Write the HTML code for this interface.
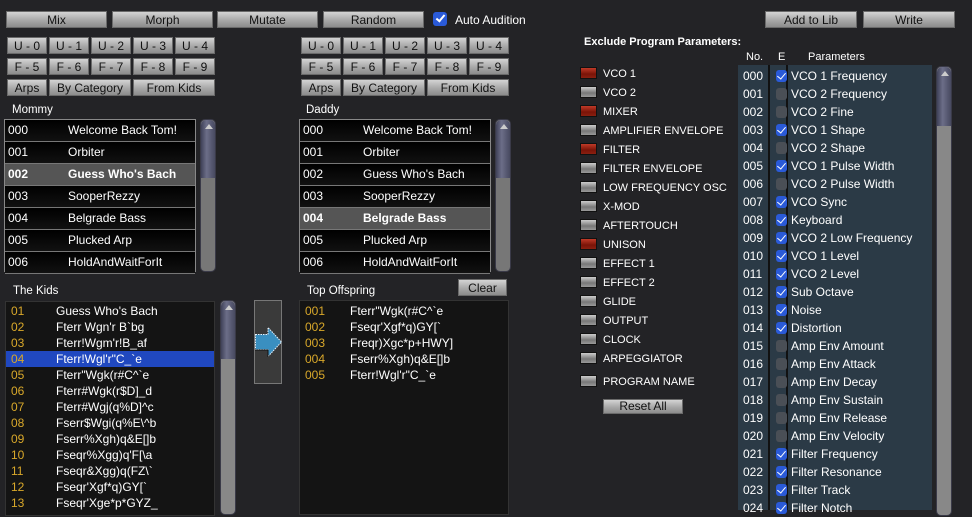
<!DOCTYPE html>
<html><head><meta charset="utf-8"><style>
*{box-sizing:border-box;margin:0;padding:0}
body{width:972px;height:510px;background:#232326;position:relative;overflow:hidden;font-family:"Liberation Sans",Arial,sans-serif;color:#fff;font-size:12px}
.a{position:absolute}
.b{position:absolute;height:17px;background:linear-gradient(#d4d4d4,#a8a8a8 55%,#8c8c8c);border:1px solid #6a6a6a;color:#111;text-align:center;line-height:16px;font-size:12px}
.lbl{position:absolute;font-size:11.5px;color:#fff}
.list{position:absolute;background:#000;border:1px solid #888}
.list .r{height:22px;border-bottom:1px solid #777;background:linear-gradient(#000,#111);position:relative;font-size:12px;line-height:21px}
.list .r span{position:absolute}
.list .r.s{background:#555;font-weight:bold}
.sb{position:absolute;width:16px;border-radius:5px;background:#888;overflow:hidden;border:1px solid #3a3a48}
.sb .t{position:absolute;left:0;right:0;top:0;background:linear-gradient(90deg,#3f4158,#6c6e88 40%,#474960);border-radius:5px 5px 0 0}
.sb .t:before{content:"";position:absolute;left:4px;top:4px;border-left:4px solid transparent;border-right:4px solid transparent;border-bottom:5px solid #ccc}
.kl{position:absolute;background:#141414;border:1px solid #333}
.kl .r{height:16px;line-height:16px;font-size:12px;position:relative}
.kl .r span{position:absolute}
.kl .r .n{color:#d9a82a}
.led{position:absolute;left:580px;width:17px;height:12px;border:1px solid #111;background:linear-gradient(#ccc,#777 60%,#999)}
.led.on{background:linear-gradient(#c03a28,#7a1408 60%,#8a2010)}
.pl{position:absolute;left:603px;font-size:11px}
.tb{position:absolute;left:738px;top:65px;width:194px;height:445px;background:#2b3a46}
.tr{position:absolute;left:738px;height:18px;line-height:18px;font-size:12px;width:194px}
.tr .n{position:absolute;left:5px}
.tr .c{position:absolute;left:38px;top:3px;width:11px;height:12px;border-radius:3px;background:#4a4f56}
.tr .c.k{background:#2a5ad8}
.tr .c.k:after{content:"";position:absolute;left:3px;top:1px;width:4px;height:7px;border:solid #fff;border-width:0 1.5px 1.5px 0;transform:rotate(40deg)}
.tr .p{position:absolute;left:53px}
</style></head><body>
<div class="b" style="left:6px;top:11px;width:101px">Mix</div>
<div class="b" style="left:112px;top:11px;width:101px">Morph</div>
<div class="b" style="left:217px;top:11px;width:101px">Mutate</div>
<div class="b" style="left:323px;top:11px;width:101px">Random</div>
<div class="a" style="left:433px;top:12px;width:14px;height:14px;border-radius:3px;background:#2a5ad8"></div>
<div class="a" style="left:438px;top:13px;width:5px;height:9px;border:solid #fff;border-width:0 2px 2px 0;transform:rotate(40deg)"></div>
<div class="lbl" style="left:455px;top:13px;font-size:12px">Auto Audition</div>
<div class="b" style="left:765px;top:11px;width:92px">Add to Lib</div>
<div class="b" style="left:863px;top:11px;width:92px">Write</div>

<div class="b" style="left:7px;top:37px;width:40px">U - 0</div><div class="b" style="left:49px;top:37px;width:40px">U - 1</div><div class="b" style="left:91px;top:37px;width:40px">U - 2</div><div class="b" style="left:133px;top:37px;width:40px">U - 3</div><div class="b" style="left:175px;top:37px;width:40px">U - 4</div>
<div class="b" style="left:7px;top:58px;width:40px">F - 5</div><div class="b" style="left:49px;top:58px;width:40px">F - 6</div><div class="b" style="left:91px;top:58px;width:40px">F - 7</div><div class="b" style="left:133px;top:58px;width:40px">F - 8</div><div class="b" style="left:175px;top:58px;width:40px">F - 9</div>
<div class="b" style="left:7px;top:79px;width:40px">Arps</div><div class="b" style="left:49px;top:79px;width:82px">By Category</div><div class="b" style="left:133px;top:79px;width:82px">From Kids</div>

<div class="b" style="left:301px;top:37px;width:40px">U - 0</div><div class="b" style="left:343px;top:37px;width:40px">U - 1</div><div class="b" style="left:385px;top:37px;width:40px">U - 2</div><div class="b" style="left:427px;top:37px;width:40px">U - 3</div><div class="b" style="left:469px;top:37px;width:40px">U - 4</div>
<div class="b" style="left:301px;top:58px;width:40px">F - 5</div><div class="b" style="left:343px;top:58px;width:40px">F - 6</div><div class="b" style="left:385px;top:58px;width:40px">F - 7</div><div class="b" style="left:427px;top:58px;width:40px">F - 8</div><div class="b" style="left:469px;top:58px;width:40px">F - 9</div>
<div class="b" style="left:301px;top:79px;width:40px">Arps</div><div class="b" style="left:343px;top:79px;width:82px">By Category</div><div class="b" style="left:427px;top:79px;width:82px">From Kids</div>

<div class="lbl" style="left:12px;top:104px">Mommy</div>
<div class="list" style="left:4px;top:119px;width:192px;height:153px">
<div class="r"><span style="left:3px">000</span><span style="left:63px">Welcome Back Tom!</span></div>
<div class="r"><span style="left:3px">001</span><span style="left:63px">Orbiter</span></div>
<div class="r s"><span style="left:3px">002</span><span style="left:63px">Guess Who's Bach</span></div>
<div class="r"><span style="left:3px">003</span><span style="left:63px">SooperRezzy</span></div>
<div class="r"><span style="left:3px">004</span><span style="left:63px">Belgrade Bass</span></div>
<div class="r"><span style="left:3px">005</span><span style="left:63px">Plucked Arp</span></div>
<div class="r"><span style="left:3px">006</span><span style="left:63px">HoldAndWaitForIt</span></div>
</div>
<div class="sb" style="left:200px;top:119px;height:153px;background:#777"><div class="t" style="height:58px"></div></div>

<div class="lbl" style="left:306px;top:104px">Daddy</div>
<div class="list" style="left:299px;top:119px;width:192px;height:153px">
<div class="r"><span style="left:3px">000</span><span style="left:63px">Welcome Back Tom!</span></div>
<div class="r"><span style="left:3px">001</span><span style="left:63px">Orbiter</span></div>
<div class="r"><span style="left:3px">002</span><span style="left:63px">Guess Who's Bach</span></div>
<div class="r"><span style="left:3px">003</span><span style="left:63px">SooperRezzy</span></div>
<div class="r s"><span style="left:3px">004</span><span style="left:63px">Belgrade Bass</span></div>
<div class="r"><span style="left:3px">005</span><span style="left:63px">Plucked Arp</span></div>
<div class="r"><span style="left:3px">006</span><span style="left:63px">HoldAndWaitForIt</span></div>
</div>
<div class="sb" style="left:495px;top:119px;height:153px;background:#777"><div class="t" style="height:58px"></div></div>

<div class="lbl" style="left:13px;top:285px">The Kids</div>
<div class="kl" style="left:5px;top:301px;width:210px;height:215px;padding-top:1px">
<div class="r"><span class="n" style="left:5px">01</span><span style="left:50px">Guess Who's Bach</span></div>
<div class="r"><span class="n" style="left:5px">02</span><span style="left:50px">Fterr Wgn'r B`bg</span></div>
<div class="r"><span class="n" style="left:5px">03</span><span style="left:50px">Fterr!Wgm'r!B_af</span></div>
<div class="r" style="background:#2048c0"><span class="n" style="left:5px">04</span><span style="left:50px">Fterr!Wgl'r"C_`e</span></div>
<div class="r"><span class="n" style="left:5px">05</span><span style="left:50px">Fterr"Wgk(r#C^`e</span></div>
<div class="r"><span class="n" style="left:5px">06</span><span style="left:50px">Fterr#Wgk(r$D]_d</span></div>
<div class="r"><span class="n" style="left:5px">07</span><span style="left:50px">Fterr#Wgj(q%D]^c</span></div>
<div class="r"><span class="n" style="left:5px">08</span><span style="left:50px">Fserr$Wgi(q%E\^b</span></div>
<div class="r"><span class="n" style="left:5px">09</span><span style="left:50px">Fserr%Xgh)q&amp;E[]b</span></div>
<div class="r"><span class="n" style="left:5px">10</span><span style="left:50px">Fseqr%Xgg)q'F[\a</span></div>
<div class="r"><span class="n" style="left:5px">11</span><span style="left:50px">Fseqr&amp;Xgg)q(FZ\`</span></div>
<div class="r"><span class="n" style="left:5px">12</span><span style="left:50px">Fseqr'Xgf*q)GY[`</span></div>
<div class="r"><span class="n" style="left:5px">13</span><span style="left:50px">Fseqr'Xge*p*GYZ_</span></div>
</div>
<div class="sb" style="left:220px;top:300px;height:215px"><div class="t" style="height:58px"></div></div>

<div class="a" style="left:254px;top:300px;width:28px;height:84px;background:#3a3a3a;border:1px solid #777"></div>
<svg class="a" style="left:254px;top:326px" width="30" height="32"><path d="M1.5 8.5H14V1.5L27.5 16L14 30.5V23.5H1.5Z" fill="#3a8fc0" stroke="#e8f4ff" stroke-width="1" stroke-dasharray="1.5 1"/><path d="M1 24H14V31" fill="none" stroke="#111" stroke-width="1"/></svg>

<div class="lbl" style="left:307px;top:285px">Top Offspring</div>
<div class="b" style="left:458px;top:279px;width:49px">Clear</div>
<div class="kl" style="left:299px;top:300px;width:210px;height:215px;padding-top:2px">
<div class="r"><span class="n" style="left:5px">001</span><span style="left:50px">Fterr"Wgk(r#C^`e</span></div>
<div class="r"><span class="n" style="left:5px">002</span><span style="left:50px">Fseqr'Xgf*q)GY[`</span></div>
<div class="r"><span class="n" style="left:5px">003</span><span style="left:50px">Freqr)Xgc*p+HWY]</span></div>
<div class="r"><span class="n" style="left:5px">004</span><span style="left:50px">Fserr%Xgh)q&amp;E[]b</span></div>
<div class="r"><span class="n" style="left:5px">005</span><span style="left:50px">Fterr!Wgl'r"C_`e</span></div>
</div>

<div class="lbl" style="left:584px;top:36px;font-weight:bold;font-size:11px">Exclude Program Parameters:</div>
<div class="led on" style="top:67px"></div><div class="pl" style="top:68px">VCO 1</div>
<div class="led" style="top:86px"></div><div class="pl" style="top:87px">VCO 2</div>
<div class="led on" style="top:105px"></div><div class="pl" style="top:106px">MIXER</div>
<div class="led" style="top:124px"></div><div class="pl" style="top:125px">AMPLIFIER ENVELOPE</div>
<div class="led on" style="top:143px"></div><div class="pl" style="top:144px">FILTER</div>
<div class="led" style="top:162px"></div><div class="pl" style="top:163px">FILTER ENVELOPE</div>
<div class="led" style="top:181px"></div><div class="pl" style="top:182px">LOW FREQUENCY OSC</div>
<div class="led" style="top:200px"></div><div class="pl" style="top:201px">X-MOD</div>
<div class="led" style="top:219px"></div><div class="pl" style="top:220px">AFTERTOUCH</div>
<div class="led on" style="top:238px"></div><div class="pl" style="top:239px">UNISON</div>
<div class="led" style="top:257px"></div><div class="pl" style="top:258px">EFFECT 1</div>
<div class="led" style="top:276px"></div><div class="pl" style="top:277px">EFFECT 2</div>
<div class="led" style="top:295px"></div><div class="pl" style="top:296px">GLIDE</div>
<div class="led" style="top:314px"></div><div class="pl" style="top:315px">OUTPUT</div>
<div class="led" style="top:333px"></div><div class="pl" style="top:334px">CLOCK</div>
<div class="led" style="top:352px"></div><div class="pl" style="top:353px">ARPEGGIATOR</div>
<div class="led" style="top:375px"></div><div class="pl" style="top:376px">PROGRAM NAME</div>
<div class="b" style="left:603px;top:399px;width:80px;height:15px;line-height:13px">Reset All</div>

<div class="lbl" style="left:746px;top:51px;font-size:11px">No.</div>
<div class="lbl" style="left:778px;top:51px;font-size:11px">E</div>
<div class="lbl" style="left:808px;top:51px;font-size:11px">Parameters</div>
<div class="tb"></div>
<div class="a" style="left:768px;top:65px;width:2px;height:445px;background:#111"></div>
<div class="a" style="left:786px;top:65px;width:2px;height:445px;background:#111"></div>
<div class="tr" style="top:67px"><span class="n">000</span><span class="c k"></span><span class="p">VCO 1 Frequency</span></div>
<div class="tr" style="top:85px"><span class="n">001</span><span class="c"></span><span class="p">VCO 2 Frequency</span></div>
<div class="tr" style="top:103px"><span class="n">002</span><span class="c"></span><span class="p">VCO 2 Fine</span></div>
<div class="tr" style="top:121px"><span class="n">003</span><span class="c k"></span><span class="p">VCO 1 Shape</span></div>
<div class="tr" style="top:139px"><span class="n">004</span><span class="c"></span><span class="p">VCO 2 Shape</span></div>
<div class="tr" style="top:157px"><span class="n">005</span><span class="c k"></span><span class="p">VCO 1 Pulse Width</span></div>
<div class="tr" style="top:175px"><span class="n">006</span><span class="c"></span><span class="p">VCO 2 Pulse Width</span></div>
<div class="tr" style="top:193px"><span class="n">007</span><span class="c k"></span><span class="p">VCO Sync</span></div>
<div class="tr" style="top:211px"><span class="n">008</span><span class="c k"></span><span class="p">Keyboard</span></div>
<div class="tr" style="top:229px"><span class="n">009</span><span class="c k"></span><span class="p">VCO 2 Low Frequency</span></div>
<div class="tr" style="top:247px"><span class="n">010</span><span class="c k"></span><span class="p">VCO 1 Level</span></div>
<div class="tr" style="top:265px"><span class="n">011</span><span class="c k"></span><span class="p">VCO 2 Level</span></div>
<div class="tr" style="top:283px"><span class="n">012</span><span class="c k"></span><span class="p">Sub Octave</span></div>
<div class="tr" style="top:301px"><span class="n">013</span><span class="c k"></span><span class="p">Noise</span></div>
<div class="tr" style="top:319px"><span class="n">014</span><span class="c k"></span><span class="p">Distortion</span></div>
<div class="tr" style="top:337px"><span class="n">015</span><span class="c"></span><span class="p">Amp Env Amount</span></div>
<div class="tr" style="top:355px"><span class="n">016</span><span class="c"></span><span class="p">Amp Env Attack</span></div>
<div class="tr" style="top:373px"><span class="n">017</span><span class="c"></span><span class="p">Amp Env Decay</span></div>
<div class="tr" style="top:391px"><span class="n">018</span><span class="c"></span><span class="p">Amp Env Sustain</span></div>
<div class="tr" style="top:409px"><span class="n">019</span><span class="c"></span><span class="p">Amp Env Release</span></div>
<div class="tr" style="top:427px"><span class="n">020</span><span class="c"></span><span class="p">Amp Env Velocity</span></div>
<div class="tr" style="top:445px"><span class="n">021</span><span class="c k"></span><span class="p">Filter Frequency</span></div>
<div class="tr" style="top:463px"><span class="n">022</span><span class="c k"></span><span class="p">Filter Resonance</span></div>
<div class="tr" style="top:481px"><span class="n">023</span><span class="c k"></span><span class="p">Filter Track</span></div>
<div class="tr" style="top:499px"><span class="n">024</span><span class="c k"></span><span class="p">Filter Notch</span></div>
<div class="sb" style="left:936px;top:66px;height:450px"><div class="t" style="height:59px"></div></div>
</body></html>
